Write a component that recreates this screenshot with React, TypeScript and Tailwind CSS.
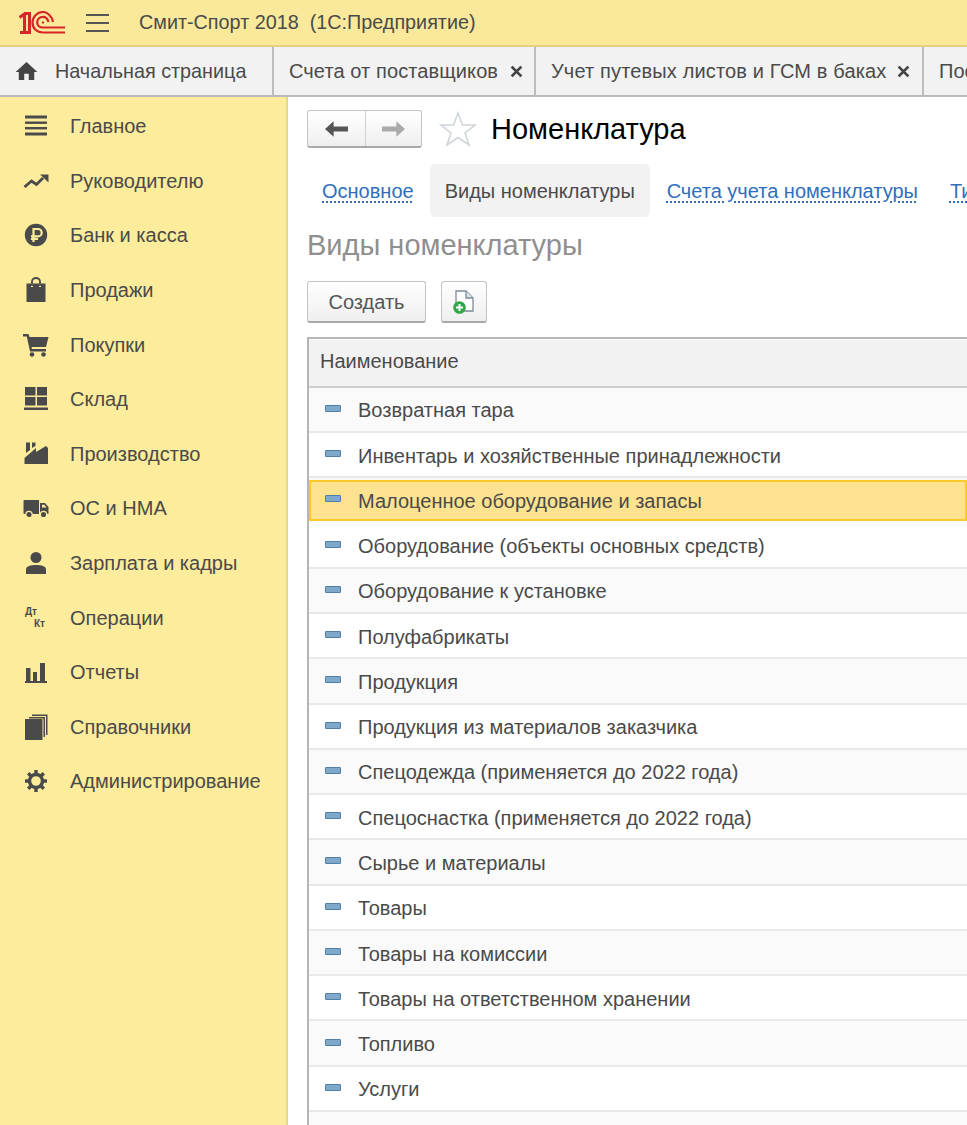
const font = { fontFamily: '"Liberation Sans", Arial, sans-serif' };

function Logo() {
  return (
    <svg viewBox="0 0 46 23" className="w-[46px] h-[23px]" fill="none" stroke="#d9252a">
      <path d="M0.500 6.500 L6 2.500 H10.500 V21.500 M5.500 3 V21.500 M1 21.500 H12" strokeWidth="3" />
      <path d="M34 11 C33 5 28 1 24 1 C18 1 13.500 6 13.500 11.500 C13.500 17.500 18 21.500 24 21.500 H46" strokeWidth="2.200" />
      <path d="M29.500 11 C28.500 7.500 26.500 5.800 24 5.800 C20.500 5.800 18.200 8.500 18.200 11.500 C18.200 14.500 20.500 16.500 24 16.500 H46" strokeWidth="2.200" />
      <path d="M25 11.500 H23" strokeWidth="2.200" />
    </svg>
  );
}

function X() {
  return (
    <svg viewBox="0 0 12 12" className="w-[13px] h-[13px]" stroke="#444" strokeWidth="2.6" fill="none">
      <path d="M1.500 1.500 L10.500 10.500 M10.500 1.500 L1.500 10.500" />
    </svg>
  );
}

const iconFill = '#4a4a4a';

function NavIcon({ name }: { name: string }) {
  const base = 'w-[26px] h-[26px]';
  switch (name) {
    case 'menu':
      return (
        <svg viewBox="0 0 26 26" className={base} fill={iconFill}>
          <rect x="2" y="2.500" width="22" height="3" />
          <rect x="2" y="8.500" width="22" height="2.400" />
          <rect x="2" y="14" width="22" height="2.400" />
          <rect x="2" y="19.500" width="22" height="3" />
        </svg>
      );
    case 'trend':
      return (
        <svg viewBox="0 0 26 26" className={base} fill="none">
          <path d="M1.500 19 L8.500 13 L13.500 16.500 L20 10" stroke={iconFill} strokeWidth="2.800" />
          <path d="M17 6.500 H25.500 V14.500 Z" fill={iconFill} />
        </svg>
      );
    case 'ruble':
      return (
        <svg viewBox="0 0 26 26" className={base}>
          <circle cx="13" cy="13" r="11.200" fill={iconFill} />
          <path d="M10.500 20 V7 H15 A3.600 3.600 0 0 1 15 14.400 H8 M8 17 H15" stroke="#fcec9c" strokeWidth="2.200" fill="none" />
        </svg>
      );
    case 'bag':
      return (
        <svg viewBox="0 0 26 26" className={base} fill={iconFill}>
          <path d="M3.500 6.500 H8 V10 H10 V6.500 H16 V10 H18 V6.500 H22.500 V25 H3.500 Z" />
          <path d="M9 9 V4.500 A4 3.500 0 0 1 17 4.500 V9" fill="none" stroke={iconFill} strokeWidth="1.800" />
        </svg>
      );
    case 'cart':
      return (
        <svg viewBox="0 0 26 26" className={base} fill={iconFill}>
          <path d="M0 2 H5.500 L6.500 5 H25.500 L23 15 H8.500 L9 17 H23 V19.500 H7 L3.800 4.500 H0 Z" />
          <circle cx="9" cy="22.500" r="2.300" />
          <circle cx="20.500" cy="22.500" r="2.300" />
        </svg>
      );
    case 'grid':
      return (
        <svg viewBox="0 0 26 26" className={base} fill={iconFill}>
          <rect x="2" y="1" width="10.500" height="8.500" />
          <rect x="14" y="1" width="10" height="8.500" />
          <rect x="2" y="11" width="10.500" height="8.500" />
          <rect x="14" y="11" width="10" height="8.500" />
          <rect x="1" y="21.500" width="24" height="2.500" />
        </svg>
      );
    case 'factory':
      return (
        <svg viewBox="0 0 26 26" className={base} fill={iconFill}>
          <path d="M1.500 23 V17 L13 7 V11 L23 5 L25 7 V23 Z" />
          <path d="M3 1.500 H7 V9 L3 12 Z" />
          <path d="M9 1.500 H12.500 V5 L9 7 Z" />
        </svg>
      );
    case 'truck':
      return (
        <svg viewBox="0 0 26 26" className={base} fill={iconFill}>
          <path d="M0.500 6 Q0.500 5 1.500 5 H16 V19 H1.500 Q0.500 19 0.500 18 Z" />
          <path d="M17 8 H22 L25.500 12 V19 H17 Z" />
          <path d="M19 9.800 H21.500 L23.500 12.500 H19 Z" fill="#fcec9c" />
          <circle cx="6" cy="19.500" r="3.200" stroke="#fcec9c" strokeWidth="1.300" />
          <circle cx="20.500" cy="19.500" r="3.200" stroke="#fcec9c" strokeWidth="1.300" />
        </svg>
      );
    case 'user':
      return (
        <svg viewBox="0 0 26 26" className={base} fill={iconFill}>
          <circle cx="13" cy="7.500" r="5.500" />
          <path d="M3 24 V19.500 C3 16 8 15 13 15 C18 15 23 16 23 19.500 V24 Z" />
        </svg>
      );
    case 'dtkt':
      return (
        <div className="w-[26px] h-[26px] relative text-[#4a4a4a] font-bold text-[10px] leading-none">
          <span className="absolute left-[2px] top-[2px]">Дт</span>
          <span className="absolute left-[11px] top-[14px]">Кт</span>
        </div>
      );
    case 'bars':
      return (
        <svg viewBox="0 0 26 26" className={base} fill={iconFill}>
          <rect x="3" y="9" width="4.500" height="13" />
          <rect x="10" y="13" width="4" height="9" />
          <rect x="17" y="4" width="5" height="18" />
          <rect x="2" y="22" width="22" height="2" />
        </svg>
      );
    case 'books':
      return (
        <svg viewBox="0 0 26 26" className={base} fill={iconFill}>
          <rect x="2" y="5" width="17.500" height="21" />
          <path d="M6 3 H22 V23 H20.500 V4.500 H6 Z" />
          <path d="M9 0.500 H24.500 V21 H23 V2 H9 Z" />
        </svg>
      );
    default:
      return (
        <svg viewBox="0 0 26 26" className={base} fill="none">
          <circle cx="13" cy="13" r="6.500" stroke={iconFill} strokeWidth="3.400" />
          <path d="M13 2 V6 M13 20 V24 M2 13 H6 M20 13 H24 M5.200 5.200 L8 8 M18 18 L20.800 20.800 M20.800 5.200 L18 8 M8 18 L5.200 20.800" stroke={iconFill} strokeWidth="3.400" />
        </svg>
      );
  }
}

const navItems = [
  ['menu', 'Главное'],
  ['trend', 'Руководителю'],
  ['ruble', 'Банк и касса'],
  ['bag', 'Продажи'],
  ['cart', 'Покупки'],
  ['grid', 'Склад'],
  ['factory', 'Производство'],
  ['truck', 'ОС и НМА'],
  ['user', 'Зарплата и кадры'],
  ['dtkt', 'Операции'],
  ['bars', 'Отчеты'],
  ['books', 'Справочники'],
  ['gear', 'Администрирование'],
];

const rows = [
  'Возвратная тара',
  'Инвентарь и хозяйственные принадлежности',
  'Малоценное оборудование и запасы',
  'Оборудование (объекты основных средств)',
  'Оборудование к установке',
  'Полуфабрикаты',
  'Продукция',
  'Продукция из материалов заказчика',
  'Спецодежда (применяется до 2022 года)',
  'Спецоснастка (применяется до 2022 года)',
  'Сырье и материалы',
  'Товары',
  'Товары на комиссии',
  'Товары на ответственном хранении',
  'Топливо',
  'Услуги',
];

function RowMark() {
  return <div className="w-[16px] h-[7px] mb-[4px] rounded-[1px] bg-[#7fa8cb] border border-[#4f7fa6] shrink-0" />;
}

export default function App() {
  return (
    <div className="w-[967px] h-[1125px] overflow-hidden bg-white flex flex-col text-[20px] text-[#4a4a4a]" style={font}>
      <div className="h-[47px] shrink-0 bg-[#fbe99b] border-b-2 border-[#e3d183] flex items-center pl-[19px]">
        <Logo />
        <div className="ml-[21px] w-[23px] flex flex-col gap-[6px]">
          <div className="h-[2px] bg-[#555]" />
          <div className="h-[2px] bg-[#555]" />
          <div className="h-[2px] bg-[#555]" />
        </div>
        <span className="ml-[30px] whitespace-pre text-[19.8px]">Смит-Спорт 2018  (1С:Предприятие)</span>
      </div>

      <div className="h-[50px] shrink-0 bg-[#f2f2f2] border-b-2 border-[#b9b9b9] flex whitespace-nowrap overflow-hidden">
        <div className="w-[274px] shrink-0 border-r-2 border-[#bdbdbd] flex items-center pl-[15px]">
          <svg viewBox="0 0 24 22" className="w-[23px] h-[20px]" fill="#444">
            <path d="M12 1 L24 12 H20.500 V21 H14.500 V14 H9.500 V21 H3.500 V12 H0 Z" />
          </svg>
          <span className="ml-[17px] pt-[1px] text-[19.8px]">Начальная страница</span>
        </div>
        <div className="w-[262px] shrink-0 border-r-2 border-[#bdbdbd] flex items-center pl-[15px]">
          <span className="tracking-[0.1px]">Счета от поставщиков</span>
          <span className="ml-[12px]"><X /></span>
        </div>
        <div className="w-[388px] shrink-0 border-r-2 border-[#bdbdbd] flex items-center pl-[15px]">
          <span className="tracking-[0.15px]">Учет путевых листов и ГСМ в баках</span>
          <span className="ml-[10px]"><X /></span>
        </div>
        <div className="w-[43px] overflow-hidden flex items-center pl-[15px]">Поступление</div>
      </div>

      <div className="flex flex-1 min-h-0">
        <div className="w-[288px] shrink-0 bg-[#fcec9c] border-r-2 border-[#e3d88f] pt-[2px]">
          {navItems.map(([icon, label]) => (
            <div key={label} className="h-[54.6px] flex items-center pl-[23px]">
              <NavIcon name={icon} />
              <span className="ml-[21px] whitespace-nowrap">{label}</span>
            </div>
          ))}
        </div>

        <div className="flex-1 min-w-0 pl-[19px] pt-[12px] overflow-hidden">
          <div className="flex items-center h-[40px]">
            <div className="w-[115px] h-[38px] flex rounded-[3px] border border-[#c4c4c4] border-b-2 border-b-[#a8a8a8] bg-gradient-to-b from-white to-[#efefef]">
              <div className="w-[58px] flex items-center justify-center border-r border-[#d0d0d0]">
                <svg viewBox="0 0 24 16" className="w-[23px] h-[16px]" fill="#555">
                  <path d="M9 0 L0 8 L9 16 V10.500 H24 V5.500 H9 Z" />
                </svg>
              </div>
              <div className="flex-1 flex items-center justify-center">
                <svg viewBox="0 0 24 16" className="w-[23px] h-[16px]" fill="#aaa">
                  <path d="M15 0 L24 8 L15 16 V10.500 H0 V5.500 H15 Z" />
                </svg>
              </div>
            </div>
            <svg viewBox="0 0 38 36" className="ml-[17px] w-[38px] h-[36px]" fill="#fff" stroke="#cfd5da" strokeWidth="1.600">
              <path d="M19 2 L23.500 14 H36 L26 22 L30 34 L19 26.500 L8 34 L12 22 L2 14 H14.500 Z" />
            </svg>
            <h1 className="ml-[14px] text-[29px] text-black leading-none whitespace-nowrap">Номенклатура</h1>
          </div>

          <div className="mt-[15px] h-[53px] flex items-center whitespace-nowrap overflow-hidden">
            <span className="ml-[15px] pt-[1px] text-[#2f6fbd] underline decoration-dotted underline-offset-[3px]">Основное</span>
            <div className="ml-[16px] w-[220px] shrink-0 h-full rounded-[5px] bg-[#f2f2f2] flex items-center pl-[15px] pt-[1px]">Виды номенклатуры</div>
            <span className="ml-[17px] pt-[1px] text-[#2f6fbd] underline decoration-dotted underline-offset-[3px]">Счета учета номенклатуры</span>
            <span className="ml-[32px] pt-[1px] text-[#2f6fbd] underline decoration-dotted underline-offset-[3px]">Типы цен</span>
          </div>

          <h2 className="mt-[12px] text-[29px] leading-[33px] text-[#8f8f8f] whitespace-nowrap">Виды номенклатуры</h2>

          <div className="mt-[19px] flex gap-[15px]">
            <div className="w-[119px] h-[42px] pt-[1px] rounded-[3px] border border-[#c4c4c4] border-b-2 border-b-[#a8a8a8] bg-gradient-to-b from-white to-[#efefef] flex items-center justify-center text-[#555]">Создать</div>
            <div className="w-[46px] h-[42px] rounded-[3px] border border-[#c4c4c4] border-b-2 border-b-[#a8a8a8] bg-gradient-to-b from-white to-[#efefef] flex items-center justify-center">
              <svg viewBox="0 0 22 24" className="w-[22px] h-[24px]">
                <path d="M3 1 H13 L20 8 V21 H3 Z" fill="#fff" stroke="#7d8b98" strokeWidth="1.300" />
                <path d="M13 1 V8 H20" fill="#dbe4ec" stroke="#7d8b98" strokeWidth="1.300" />
                <circle cx="6.500" cy="17.500" r="6.300" fill="#2fa84a" />
                <path d="M6.500 14 V21 M3 17.500 H10" stroke="#fff" strokeWidth="2" />
              </svg>
            </div>
          </div>

          <div className="mt-[14px] border-l-2 border-t-2 border-[#b5b5b5]">
            <div className="h-[48.7px] pb-[3px] bg-[#f2f2f2] border-t border-t-white border-b-2 border-b-[#cfcfcf] flex items-center pl-[11px]">Наименование</div>
            {rows.map((name, i) => {
              if (i === 2) {
                return (
                  <div key={name} className="h-[45.27px] pt-[2px] pb-[2px] bg-[#fafafa] whitespace-nowrap">
                    <div className="h-full bg-[#fde28f] border-2 border-[#fbc92c] pl-[14px] flex items-center">
                      <RowMark />
                      <span className="ml-[17px]">{name}</span>
                    </div>
                  </div>
                );
              }
              const bg = i % 2 === 0 ? 'bg-[#fafafa]' : 'bg-white';
              return (
                <div key={name} className={`h-[45.27px] border-b-2 border-b-[#e9e9e9] pl-[16px] pt-[2px] flex items-center whitespace-nowrap ${bg}`}>
                  <RowMark />
                  <span className="ml-[17px]">{name}</span>
                </div>
              );
            })}
            <div className="h-[45.27px] bg-[#fafafa]" />
          </div>
        </div>
      </div>
    </div>
  );
}
